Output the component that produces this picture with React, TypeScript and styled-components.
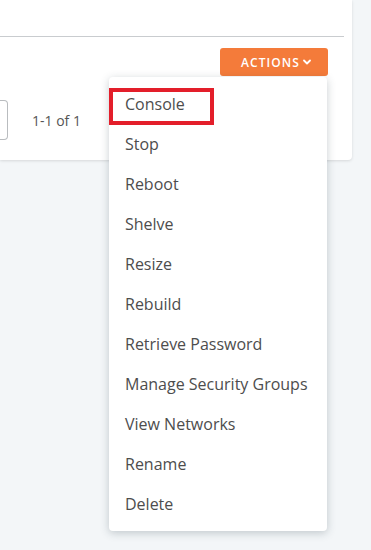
import React from 'react';
import styled, { createGlobalStyle } from 'styled-components';

const GlobalStyle = createGlobalStyle`
  html, body {
    margin: 0;
    padding: 0;
    background: #f3f6f8;
    font-family: "Open Sans", "Liberation Sans", sans-serif;
  }
`;

const Page = styled.div`
  width: 371px;
  height: 550px;
  overflow: hidden;
  position: relative;
`;

const Card = styled.div`
  width: 352px;
  height: 160px;
  background: #ffffff;
  border-bottom-right-radius: 4px;
  box-shadow: 0 1px 3px rgba(0, 0, 0, 0.12);
  display: flex;
  flex-direction: column;
`;

const Header = styled.div`
  height: 36px;
  margin-right: 8px;
  border-bottom: 1px solid #c9cccf;
  flex-shrink: 0;
`;

const Toolbar = styled.div`
  display: flex;
  justify-content: flex-end;
  padding: 11px 24px 0 0;
`;

const ActionsWrap = styled.div`
  position: relative;
`;

const ActionsButton = styled.button`
  width: 108px;
  height: 28px;
  border: none;
  border-radius: 3px;
  background: #f47b3a;
  color: #ffffff;
  font-family: "Open Sans", "Liberation Sans", sans-serif;
  font-weight: 600;
  font-size: 12px;
  letter-spacing: 1.1px;
  display: flex;
  align-items: center;
  justify-content: center;
  gap: 3px;
  padding: 0 0 0 4px;
  cursor: pointer;
`;

const PagerRow = styled.div`
  display: flex;
  align-items: center;
  gap: 24px;
  margin-top: 24px;
`;

const PageSizeBox = styled.div`
  width: 7px;
  height: 38px;
  border: 1px solid #b9bcbf;
  border-left: none;
  border-radius: 0 4px 4px 0;
`;

const PageCount = styled.span`
  font-size: 14px;
  color: #555;
`;

const Menu = styled.ul`
  position: absolute;
  top: 29px;
  right: 1px;
  width: 218px;
  margin: 0;
  padding: 7px 0;
  list-style: none;
  background: #ffffff;
  border-radius: 4px;
  box-shadow: 0 2px 8px rgba(40, 60, 70, 0.25);
  z-index: 10;
`;

const MenuItem = styled.li`
  height: 40px;
  display: flex;
  align-items: center;
  padding-left: 16px;
  font-size: 16px;
  color: #4d4d4d;
  cursor: pointer;
`;

const Highlight = styled.div`
  position: absolute;
  left: 0;
  top: 11px;
  width: 105px;
  height: 37px;
  box-sizing: border-box;
  border: 4px solid #e31e2a;
  pointer-events: none;
`;

const items = [
  'Console',
  'Stop',
  'Reboot',
  'Shelve',
  'Resize',
  'Rebuild',
  'Retrieve Password',
  'Manage Security Groups',
  'View Networks',
  'Rename',
  'Delete',
];

const Chevron = () => (
  <svg width="8" height="6" viewBox="0 0 8 6" fill="none">
    <path d="M1 1.5 L4 4.5 L7 1.5" stroke="#fff" strokeWidth="1.8" strokeLinecap="round" strokeLinejoin="round" />
  </svg>
);

export default function App() {
  return (
    <Page>
      <GlobalStyle />
      <Card>
        <Header />
        <Toolbar>
          <ActionsWrap>
            <ActionsButton>
              ACTIONS <Chevron />
            </ActionsButton>
            <Menu>
              {items.map((item) => (
                <MenuItem key={item}>{item}</MenuItem>
              ))}
              <Highlight />
            </Menu>
          </ActionsWrap>
        </Toolbar>
        <PagerRow>
          <PageSizeBox />
          <PageCount>1-1 of 1</PageCount>
        </PagerRow>
      </Card>
    </Page>
  );
}
